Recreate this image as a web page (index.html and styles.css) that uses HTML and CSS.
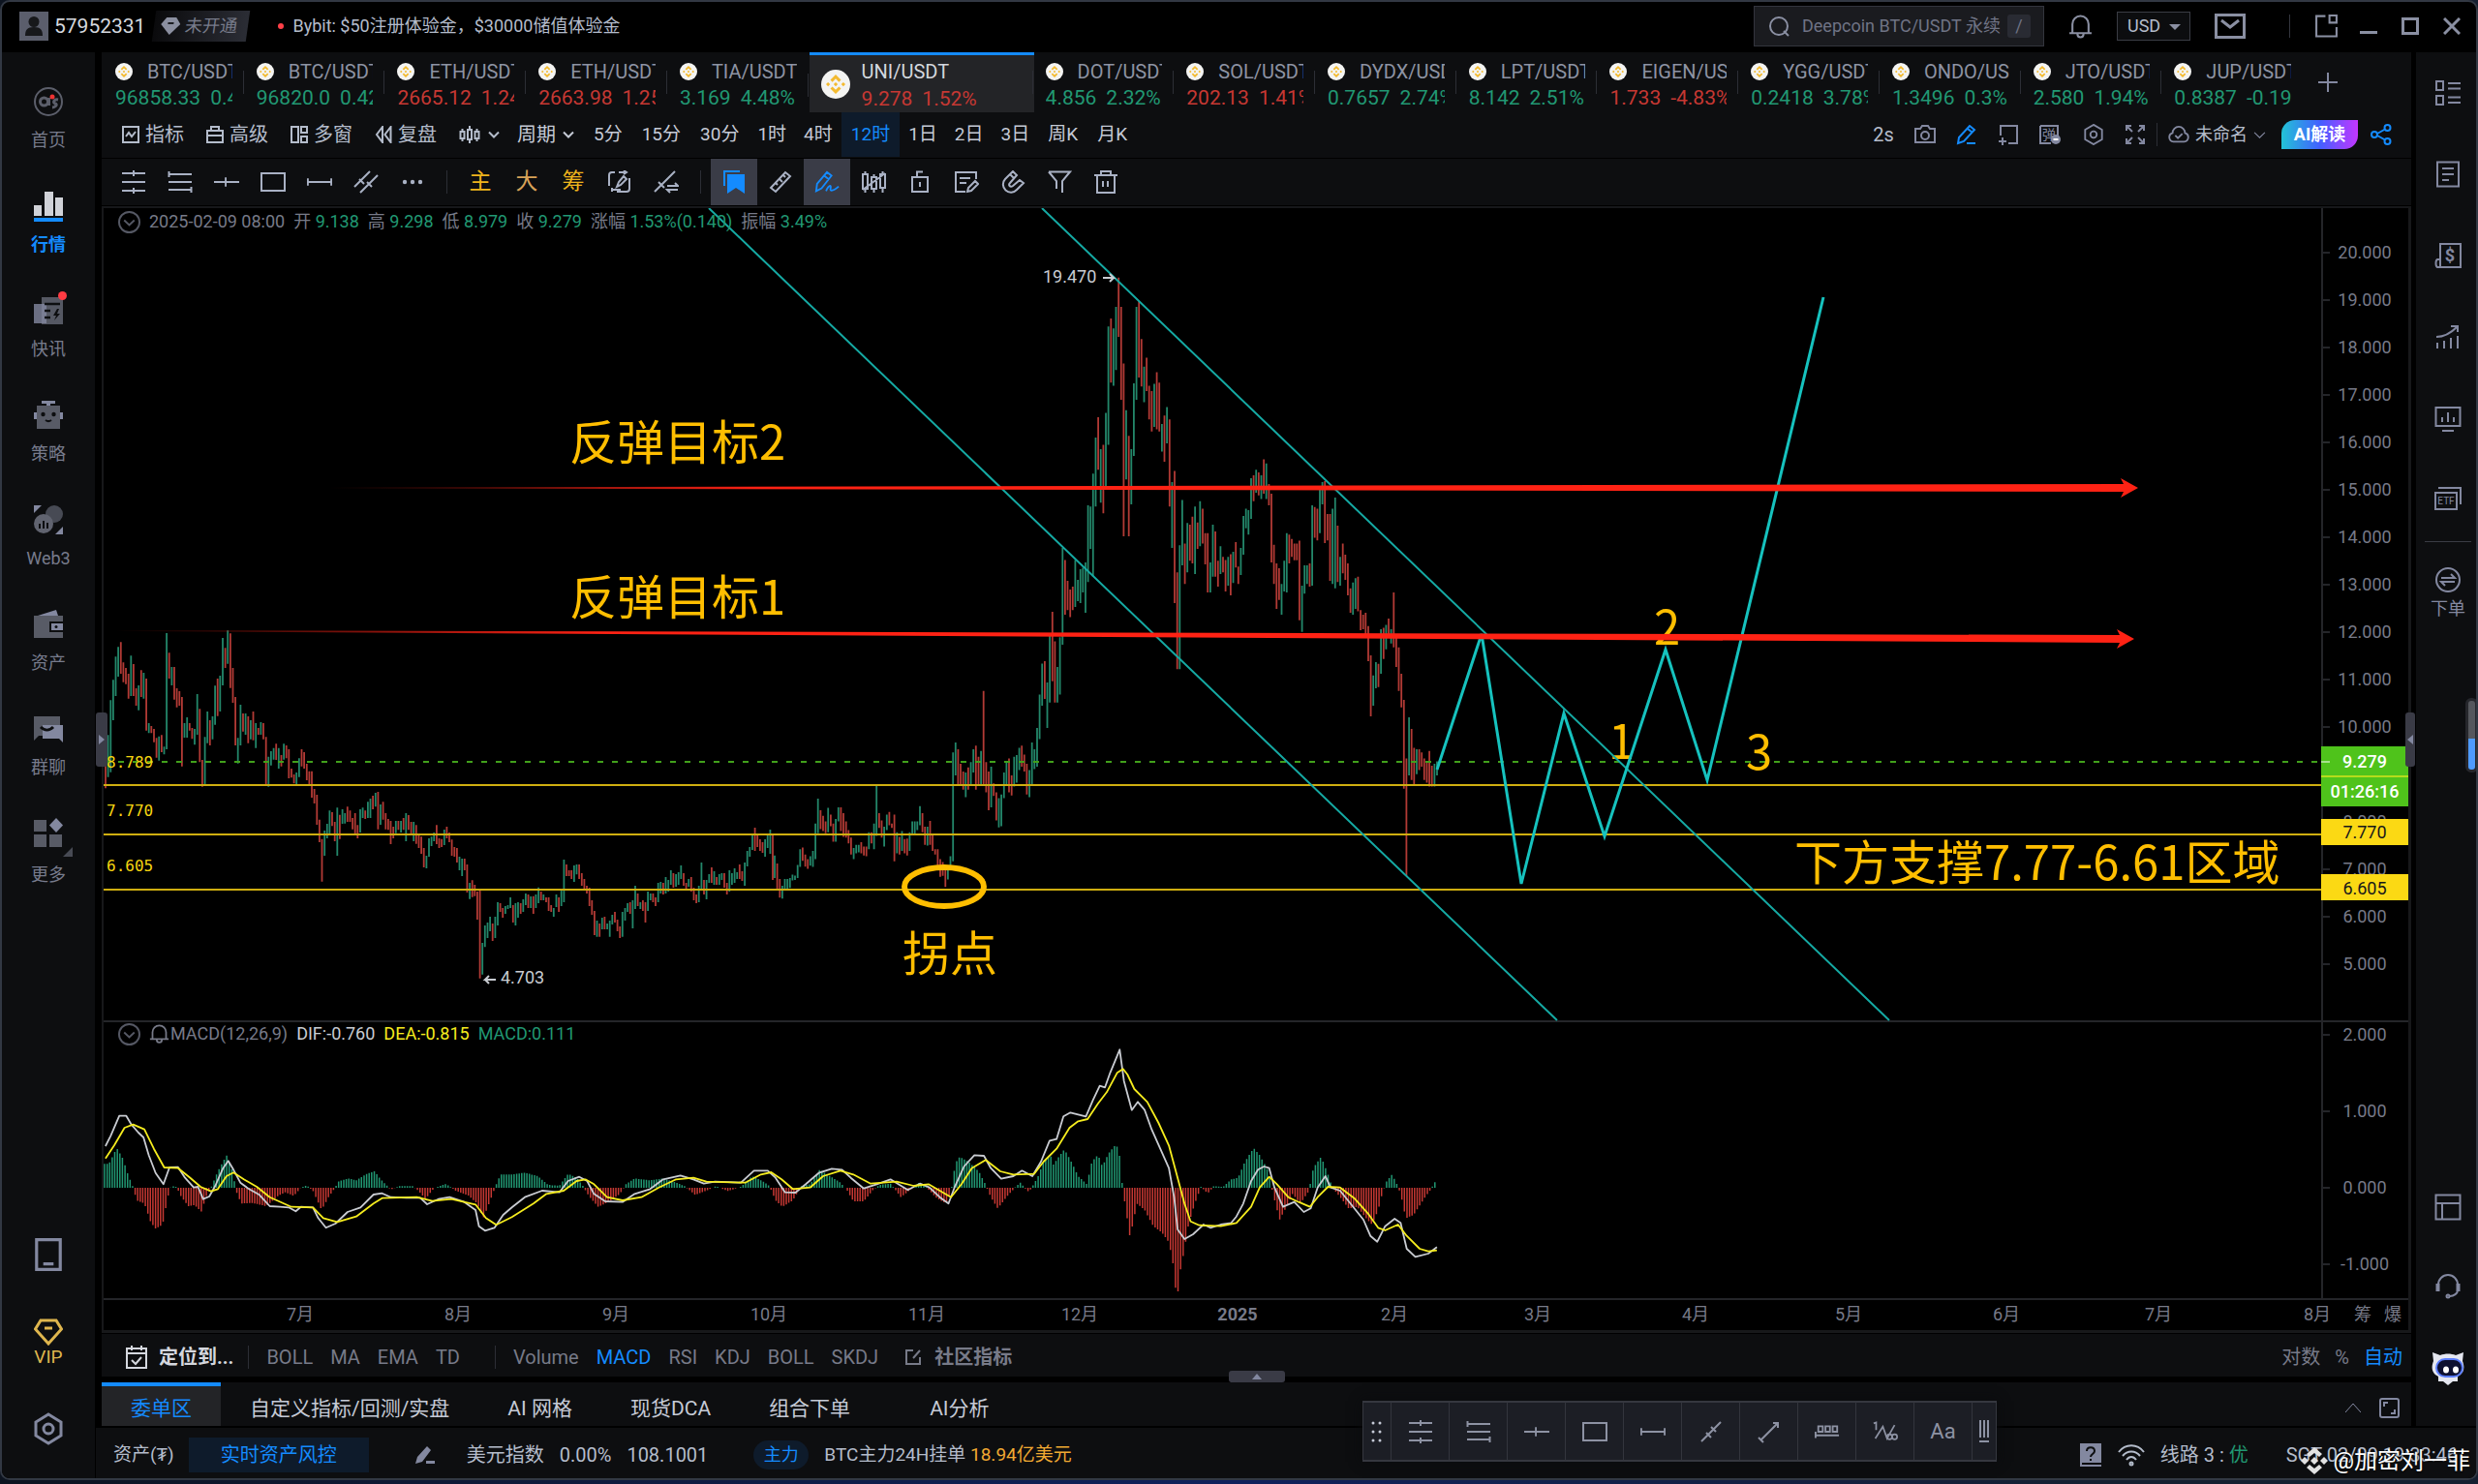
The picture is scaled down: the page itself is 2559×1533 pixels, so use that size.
FILE: index.html
```html
<!DOCTYPE html>
<html lang="zh-CN">
<head>
<meta charset="utf-8">
<title>UNI/USDT</title>
<link rel="stylesheet" href="styles.css">
</head>
<body>
<svg class="defs" aria-hidden="true">
  <symbol id="coin" viewBox="0 0 24 24"><circle cx="12" cy="12" r="12" fill="#f4f4f2"/><path fill="#f3ba2f" d="M12 4l4.400 4.400-1.700 1.700L12 7.400l-2.700 2.700-1.700-1.700zM5.700 10.300L7.400 12l-1.700 1.700L4 12zM18.300 10.300L20 12l-1.700 1.700-1.700-1.700zM12 10.300l1.700 1.700-1.700 1.700-1.700-1.700zM12 20l-4.400-4.400 1.700-1.700 2.700 2.700 2.700-2.700 1.700 1.700z"/></symbol>
  <symbol id="chev" viewBox="0 0 12 12"><path d="M1 3.500l5 5 5-5"/></symbol>
  <symbol id="hlines" viewBox="0 0 26 24"><path d="M1 3h24M1 12h24M1 21h24M13 0v6M13 18v6"/></symbol>
  <symbol id="hrays" viewBox="0 0 26 24"><path d="M1 4h24M1 12h24M1 20h24M1.500 1v6M24.500 17v6"/></symbol>
  <symbol id="hcross" viewBox="0 0 28 24"><path d="M0 12h28M13 7v10"/></symbol>
  <symbol id="rect" viewBox="0 0 26 24"><path d="M1 3h24v18H1z"/></symbol>
  <symbol id="hseg" viewBox="0 0 28 24"><path d="M1 12h26M1 8v8M27 8v8"/></symbol>
  <symbol id="hex" viewBox="0 0 24 24"><path d="M12 1l9.500 5.500v11L12 23l-9.500-5.500v-11z"/><circle cx="12" cy="12" r="3.600"/></symbol>
  <symbol id="circlechev" viewBox="0 0 24 24"><circle cx="12" cy="12" r="11"/><path d="M6.500 10l5.500 5 5.500-5"/></symbol>
</svg>

<div class="window">
  <header class="titlebar">
    <span class="avatar"><svg viewBox="0 0 30 30"><circle cx="15" cy="10.500" r="5.500"/><path d="M6 25c0-6 2-9 9-9s9 3 9 9z"/></svg></span>
    <span class="uid">57952331</span>
    <span class="badge"><svg viewBox="0 0 22 20"><path d="M6 1h10l5 7-10 11L1 8z" fill="#8b8fa0"/><path d="M8 7h6" stroke="#1c1d22" stroke-width="2"/></svg><em>未开通</em></span>
    <a class="news" href="#"><i></i>Bybit: $50注册体验金，$30000储值体验金</a>
    <div class="titleright">
      <label class="search"><svg viewBox="0 0 24 24"><circle cx="12" cy="12" r="9"/><path d="M17 17l5 5"/></svg><input type="text" placeholder="Deepcoin BTC/USDT 永续" aria-label="搜索"><kbd>/</kbd></label>
      <button class="ib bell" aria-label="通知"><svg viewBox="0 0 24 24"><path d="M1 19h22M4 19v-9a8 8 0 0 1 16 0v9M9 20c0 4 6 4 6 0"/></svg></button>
      <span class="currency"><select aria-label="货币"><option>USD</option></select></span>
      <button class="ib mail" aria-label="邮件"><svg viewBox="0 0 32 26"><path d="M1.500 1.500h29v23h-29zM7 7l9 7 9-7"/></svg></button>
      <span class="tdiv"></span>
      <button class="ib wide" aria-label="布局"><svg viewBox="0 0 24 24"><path d="M11 2H2v20h20v-9M15 1.500h7v7h-7z"/></svg></button>
      <button class="ib" aria-label="最小化"><svg viewBox="0 0 18 18"><path d="M0 15.500h18"/></svg></button>
      <button class="ib" aria-label="最大化"><svg viewBox="0 0 18 18"><path d="M1.500 1.500h15v15h-15z"/></svg></button>
      <button class="ib" aria-label="关闭"><svg viewBox="0 0 18 18"><path d="M1 1l16 16M17 1L1 17"/></svg></button>
    </div>
  </header>

  <div class="shell">
    <nav class="side">
      <a href="#"><svg viewBox="0 0 32 32"><g fill="none" stroke="#5b5e6a" stroke-width="2"><circle cx="16" cy="16" r="14"/><circle cx="11.500" cy="16" r="4" stroke-width="3"/><path d="M16.500 12v8M26 14c-4-1-6 3-3 4s0 4-3 4" stroke-width="3"/></g><circle cx="20" cy="11" r="2.500" fill="#e33"/></svg>首页</a>
      <a href="#" class="on"><svg viewBox="0 0 32 32"><path fill="#d0d2d8" d="M1 15h8v11H1zM12 1h9v25h-9zM23 7h8v19h-8z"/><path fill="#148bff" d="M1 28h30v4H1z"/></svg>行情</a>
      <a href="#" class="dot"><svg viewBox="0 0 32 32"><path fill="#555863" d="M9 2h22v28H9z"/><path fill="#8388a0" opacity=".8" d="M1 9h13v20H1z"/><path stroke="#0d0e10" stroke-width="2.500" fill="none" d="M12 9h16M12 16h6M12 23h6"/><path fill="#0d0e10" d="M25 14l-4 7h3l-2 5 6-7h-3l2-5z"/></svg>快讯</a>
      <a href="#"><svg viewBox="0 0 32 32"><path fill="#8388a0" d="M9 1h14v3h-5v4h-4V4H9zM1 13h3v7H1zM28 13h3v7h-3z"/><path fill="#585b66" d="M4 6h24v24H4z"/><path stroke="#0d0e10" stroke-width="2" fill="none" d="M13 21c2 1.500 4 1.500 6 0"/><circle cx="10.500" cy="15" r="2.200"/><circle cx="21.500" cy="15" r="2.200"/></svg>策略</a>
      <a href="#"><svg viewBox="0 0 32 32"><circle cx="22" cy="10" r="9" fill="#474a54"/><circle cx="11" cy="20" r="10" fill="#60636f"/><path fill="#8388a0" d="M1 1h8L1 9zM31 31h-8l8-8z"/><path stroke="#0d0e10" stroke-width="2" d="M7 25v-5M11 25v-8M15 25v-6"/></svg>Web3</a>
      <a href="#"><svg viewBox="0 0 32 32"><path fill="#8388a0" d="M5 7l19-6 2 6z"/><path fill="#585b66" d="M1 7h30v23H1z"/><path fill="#0d0e10" d="M17 13h14v11H17z"/><path fill="#8388a0" d="M19 15h12v7H19z"/><circle cx="24" cy="18.500" r="1.500"/></svg>资产</a>
      <a href="#"><svg viewBox="0 0 32 32"><path fill="#585b66" d="M1 3h27v20H6l-5 5z"/><path fill="#8388a0" d="M10 12h21v18l-4-4H10z"/><path stroke="#0d0e10" stroke-width="3" fill="none" d="M8 14c4 4 9 4 13 0"/></svg>群聊</a>
      <a href="#" class="more"><svg viewBox="0 0 32 32"><path fill="#585b66" d="M1 2h13v12H1zM1 17h13v13H1zM17 17h13v13H17z"/><path fill="#8388a0" d="M24 0l7 7.500-7 7.500-7-7.500z"/></svg>更多</a>
      <div class="sidefoot">
        <button aria-label="手机"><svg viewBox="0 0 26 32"><path d="M1.500 1.500h23v29h-23zM8 25h10"/></svg></button>
        <button class="vip"><svg viewBox="0 0 30 28"><path d="M7 2h16l5.500 9L15 26 1.500 11zM11 10h8"/></svg>VIP</button>
        <button aria-label="设置"><svg viewBox="0 0 30 34"><path d="M15 2l13 8v14l-13 8-13-8V10z"/><circle cx="15" cy="17" r="5"/></svg></button>
      </div>
    </nav>

    <div class="right">
      <div class="work">
        <main class="center">
          <div class="tabs">
            <div class="tablist" id="tabs"></div>
            <button class="plus" aria-label="添加"><svg viewBox="0 0 20 20"><path d="M10 0v20M0 10h20"/></svg></button>
          </div>

          <div class="bar periods">
            <div class="tools">
              <button><svg viewBox="0 0 18 18"><path d="M1 1h16v16H1zM4 11l3-4 3 4 4-5"/></svg>指标</button>
              <button><svg viewBox="0 0 18 18"><path d="M1 5h16v12H1zM5 5V1h8v4M1 10h16"/></svg>高级</button>
              <button><svg viewBox="0 0 18 18"><path d="M1 1h7v16H1zM11 1h6v6h-6zM11 11h6v6h-6z"/></svg>多窗</button>
              <button><svg viewBox="0 0 18 18"><path d="M8 1L2 9l6 8zM16.500 1l-6 8 6 8z"/></svg>复盘</button>
              <button class="kind" aria-label="K线类型"><svg viewBox="0 0 22 18"><path d="M1.500 6h4v7h-4zM9 4h4v10H9zM16.500 6h4v7h-4zM3.500 3v3M3.500 13v3M11 0v4M11 14v4M18.500 3v3M18.500 13v3"/></svg><svg class="chev"><use href="#chev"/></svg></button>
            </div>
            <div class="times">
              <button class="cyc">周期<svg class="chev"><use href="#chev"/></svg></button>
              <button>5分</button><button>15分</button><button>30分</button><button class="slim">1时</button><button class="slim">4时</button><button class="on">12时</button><button class="slim">1日</button><button class="slim">2日</button><button class="slim">3日</button><button>周K</button><button>月K</button>
            </div>
            <div class="acts">
              <button class="txt">2s</button>
              <button aria-label="截图"><svg viewBox="0 0 22 22"><path d="M1 5h5l2-3h6l2 3h5v14H1z"/><circle cx="11" cy="12" r="4"/></svg></button>
              <button class="blue" aria-label="画线"><svg viewBox="0 0 22 22"><path d="M14 2l5 4L8 18l-6 2 1-6zM11 20h9M12 5l5 4"/></svg></button>
              <button aria-label="区间"><svg viewBox="0 0 22 22"><path d="M3 12V2h17v18h-9M1 18h8M5 14v8"/></svg></button>
              <button class="dan" aria-label="弹幕"><svg viewBox="0 0 22 22"><path d="M1 2h18v11M1 2v18h11"/><circle cx="17" cy="16" r="5" fill="#8388a0" stroke="none"/><path d="M14.500 16h5" stroke="#fff"/></svg><span>弹</span></button>
              <button aria-label="设置"><svg><use href="#hex"/></svg></button>
              <button aria-label="全屏"><svg viewBox="0 0 22 22"><path d="M2 7V2h5M15 2h5v5M20 15v5h-5M7 20H2v-5M2 2l6 6M20 2l-6 6M20 20l-6-6M2 20l6-6"/></svg></button>
              <span class="vdiv"></span>
              <button class="cloud"><svg viewBox="0 0 24 22"><path d="M6 19a5 5 0 0 1-1-9.800 7 7 0 0 1 14 0A5 5 0 0 1 18 19zM8 12l3 3 5-5"/></svg>未命名<svg class="chev"><use href="#chev"/></svg></button>
              <button class="ai">AI解读</button>
              <button class="blue" aria-label="分享"><svg viewBox="0 0 22 22"><circle cx="4" cy="11" r="3"/><circle cx="17.500" cy="4" r="3"/><circle cx="17.500" cy="18" r="3"/><path d="M7 10l8-4.500M7 12l8 4.500"/></svg></button>
            </div>
          </div>

          <div class="bar draw">
            <button aria-label="水平线"><svg><use href="#hlines"/></svg></button>
            <button aria-label="射线"><svg><use href="#hrays"/></svg></button>
            <button aria-label="十字"><svg><use href="#hcross"/></svg></button>
            <button aria-label="矩形"><svg><use href="#rect"/></svg></button>
            <button aria-label="线段"><svg><use href="#hseg"/></svg></button>
            <button aria-label="平行线"><svg viewBox="0 0 26 24"><path d="M1 17L17 1M7 23L25 5M6 9l5 5M14 12l5 5"/></svg></button>
            <button aria-label="更多"><svg viewBox="0 0 26 24"><g fill="#a9b1c4" stroke="none"><circle cx="5" cy="12" r="2.200"/><circle cx="13" cy="12" r="2.200"/><circle cx="21" cy="12" r="2.200"/></g></svg></button>
            <span class="vdiv"></span>
            <button class="gold">主</button><button class="gold soft">大</button><button class="gold">筹</button>
            <button aria-label="编辑"><svg viewBox="0 0 26 24"><path d="M8 2H5a3 3 0 0 0-3 3v11M10 22h10a3 3 0 0 0 3-3V8M5 20h9M10 17l2-5 5-6 3 3-6 6zM20 2h-8M17 0l3 2-3 2M5 18v4"/></svg></button>
            <button aria-label="切换"><svg viewBox="0 0 26 24"><path d="M1 22L22 1M5 12l6 6M14 16h11l-3-3M25 20H14l3 3"/></svg></button>
            <span class="vdiv"></span>
            <button class="sel" aria-label="收藏"><svg viewBox="0 0 26 24"><path fill="#148bff" stroke="none" d="M6 4h18v20l-9-6-9 6z"/><path stroke="#148bff" d="M3 16V1h16"/></svg></button>
            <button aria-label="标尺"><svg viewBox="0 0 26 24"><path d="M3 18L18 2l5 4L8 22zM8 13l2 2M12 9l3 3M16 5l2 2"/></svg></button>
            <button class="sel blue" aria-label="画笔"><svg viewBox="0 0 28 24"><path d="M2 22l1-8L14 1l5 4L8 19zM11 5l5 4M13 22c3-7 6-7 5-3s3 3 9-2"/></svg></button>
            <button aria-label="K线"><svg viewBox="0 0 26 24"><path d="M2 4h5v15H2zM11 7h5v12h-5zM20 4h5v14h-5zM4.500 1v3M4.500 19v4M13.500 4v3M13.500 19v4M22.500 1v3M22.500 18v5M2 20L25 3"/></svg></button>
            <button aria-label="锁定"><svg viewBox="0 0 26 24"><path d="M5 7h16v15H5zM13 12v5M10 7V1.500h6"/></svg></button>
            <button aria-label="笔记"><svg viewBox="0 0 26 24"><path d="M12 22H2V2h21v7M6 8h11M6 13h7M14 22l1-4 7-7 3 3-7 7z"/></svg></button>
            <button aria-label="磁铁"><svg viewBox="0 0 26 24"><path d="M13 1L5 9a8 8 0 0 0 12 11l7-7-4-3-7 6c-3 2-5-1-3-3l7-8zM10 4l4 4"/></svg></button>
            <button aria-label="筛选"><svg viewBox="0 0 26 24"><path d="M2 1.500h22L16 11v12M10 19v-8L2 1.500"/></svg></button>
            <button aria-label="删除"><svg viewBox="0 0 26 24"><path d="M1 5h24M8 5V1h10v4M4 5v18h18V5M10 11v6M15 11v6"/></svg></button>
          </div>

          <section class="chart">
            <svg id="plot" viewBox="107 215 2380 1159" role="img" aria-label="UNI/USDT 12时 K线">
              <defs>
                <linearGradient id="fade" x1="0" x2="1"><stop offset="0" stop-color="#ff2214" stop-opacity="0"/><stop offset=".24" stop-color="#ff2214"/></linearGradient>
              </defs>
              <g id="axis"></g>
              <g id="candles"></g>
              <path class="last" d="M107 787H2397"/>
              <g class="level"><path d="M107 811H2397M107 862H2397M107 919H2397"/></g>
              <g class="note">
                <text x="588" y="475">反弹目标2</text><text x="588" y="635">反弹目标1</text>
                <text x="1708" y="666">2</text><text x="1661" y="784">1</text><text x="1803" y="795">3</text>
                <text x="1853" y="909">下方支撑7.77-6.61区域</text><text x="932" y="1003">拐点</text>
              </g>
              <g class="channel"><path d="M732 215L1608 1054M1076 215L1951 1054"/><path class="zig" d="M1484 795L1530 655L1571 913L1615 737L1657 864L1720 671L1763 806L1883 307"/></g>
              <path fill="url(#fade)" d="M340 503.500L2193 500L2190 494L2208 504L2190 514L2193 508L340 504.500z"/>
              <path fill="url(#fade)" d="M120 651L2189 656L2186 650L2204 660L2186 670L2189 664L120 652z"/>
              <ellipse cx="975" cy="916" rx="41" ry="20" class="ring"/>
              <g class="peak"><text x="1077" y="292">19.470</text><text x="517" y="1016">4.703</text><path d="M1139 287h11l-4-4M1150 287l-4 4M512 1012h-11l4-4M501 1012l4 4"/></g>
              <g class="side-price"><text x="110" y="793">8.789</text><text x="110" y="843">7.770</text><text x="110" y="900">6.605</text></g>
              <g id="macd"></g>
              <g class="tags">
                <rect x="2397" y="771" width="90" height="62" fill="#4fc31b"/><path d="M2397 802h90" stroke="#b5dc1c" stroke-width="2"/><path d="M2397 787h9" stroke="#fff"/>
                <rect x="2397" y="846" width="90" height="27" fill="#fbd914"/><rect x="2397" y="903" width="90" height="27" fill="#fbd914"/>
                <text x="2442" y="793" class="w">9.279</text><text x="2442" y="824" class="w">01:26:16</text>
                <text x="2442" y="866">7.770</text><text x="2442" y="924">6.605</text>
              </g>
            </svg>
            <div class="legend ohlc"><svg><use href="#circlechev"/></svg><span>2025-02-09 08:00</span><span>开 <b>9.138</b></span><span>高 <b>9.298</b></span><span>低 <b>8.979</b></span><span>收 <b>9.279</b></span><span>涨幅 <b>1.53%(0.140)</b></span><span>振幅 <b>3.49%</b></span></div>
            <div class="legend macdl"><svg><use href="#circlechev"/></svg><span class="bellname"><svg viewBox="0 0 24 24"><path d="M1 18h22M4 18v-8a8 8 0 0 1 16 0v8M9 19c0 4 6 4 6 0"/></svg>MACD(12,26,9)</span><span class="dif">DIF:-0.760</span><span class="dea">DEA:-0.815</span><b>MACD:0.111</b></div>
            <button class="grip gl" aria-label="展开左栏"></button>
            <button class="grip gr" aria-label="展开右栏"></button>
          </section>

          <div class="bar inds">
            <button class="locate"><svg viewBox="0 0 22 24"><path d="M1 3h20v20H1zM1 8h20M6 0v5M16 0v5M6 15l4 4 6-7"/></svg>定位到...</button>
            <span class="vdiv"></span>
            <button>BOLL</button><button>MA</button><button>EMA</button><button>TD</button>
            <span class="vdiv far"></span>
            <button>Volume</button><button class="on">MACD</button><button>RSI</button><button>KDJ</button><button>BOLL</button><button>SKDJ</button>
            <button class="comm"><svg viewBox="0 0 16 16"><path d="M8 1H1v14h14V8M8 9l7-8"/></svg>社区指标</button>
            <div class="scale"><button>对数</button><button>%</button><button class="on">自动</button></div>
            <button class="grip gb" aria-label="展开底栏"></button>
          </div>

          <div class="bar panels">
            <button class="on">委单区</button><button>自定义指标/回测/实盘</button><button>AI 网格</button><button>现货DCA</button><button>组合下单</button><button class="last-tab">AI分析</button>
            <div class="pright"><svg viewBox="0 0 16 16"><path d="M0 12l8-9 8 9"/></svg><svg class="full" viewBox="0 0 21 21"><rect x="1" y="1" width="19" height="19" rx="2"/><path d="M5 9V5h4M16 12v4h-4"/></svg></div>
          </div>
        </main>

        <aside class="rail">
          <button aria-label="列表"><svg viewBox="0 0 28 28"><path d="M2 2h7v9H2zM2 17h7v9H2zM14 4h13M14 9.500h13M14 18.500h13M14 24h13"/></svg></button>
          <button aria-label="资讯"><svg viewBox="0 0 28 28"><path d="M3 1.500h22v25H3zM8 8h12M8 14h12M8 20h7"/></svg></button>
          <button aria-label="资金"><svg viewBox="0 0 28 28"><path d="M6 2h21v24H3c-2-1-2-7 0-8h3zM6 18v7"/></svg><span>$</span></button>
          <button aria-label="走势"><svg viewBox="0 0 28 28"><path d="M3 26v-6M10 26v-8M17 26V15M24 26V13M2 14c8 0 15-4 21-10M17 3h7v6"/></svg></button>
          <button aria-label="数据"><svg viewBox="0 0 28 28"><path d="M1.500 3h25v19h-25zM8 27h12M8 18v-5M14 18V8M20 18v-5"/></svg></button>
          <button aria-label="ETF"><svg viewBox="0 0 28 28"><path d="M1 7h22v17H1zM4 2h23v17"/></svg><span class="etf">ETF</span></button>
          <hr>
          <button class="order"><svg viewBox="0 0 28 28"><circle cx="14" cy="14" r="12"/><path d="M7 12h14l-4-4M21 16H7l4 4"/></svg>下单</button>
          <div class="railfoot">
            <button aria-label="面板"><svg viewBox="0 0 28 28"><path d="M1.500 1.500h25v25h-25zM1.500 10h25M8 10v16"/></svg></button>
            <button aria-label="客服"><svg viewBox="0 0 28 28"><path d="M4 14v-1a10 10 0 0 1 20 0v1M24 19c0 3-4 6-8 6"/><path d="M3.500 12v8M24.500 12v8" stroke-width="4"/><circle cx="14" cy="25" r="1.500"/></svg></button>
            <button aria-label="AI助手"><svg class="bot" viewBox="0 0 36 36"><path fill="#e4e6ef" d="M2 2l8 3c5-2 11-2 16 0l8-3-1 9c3 8 1 13-5 16v5h-5l-5 4-5-4H8v-5C2 24 0 19 3 11z"/><rect x="6" y="9" width="27" height="18" rx="9" fill="#0d1030" stroke="#5b7dff" stroke-width="2"/><ellipse cx="16" cy="20" rx="3" ry="3.500" fill="#fff"/><ellipse cx="26" cy="20" rx="3" ry="3.500" fill="#fff"/></svg></button>
          </div>
        </aside>
      </div>

      <footer class="status">
        <a href="#" class="assets">资产(₮)</a><button class="risk">实时资产风控</button>
        <svg class="pen" viewBox="0 0 20 18"><path d="M12 0l4 4-9 12-7 2 2-7zM11 15h9v3h-9z"/></svg>
        <span class="idx">美元指数</span><span>0.00%</span><span class="num">108.1001</span>
        <span class="pill">主力</span><span class="orders">BTC主力24H挂单 <b>18.94亿美元</b></span>
        <div class="sright"><svg class="help" viewBox="0 0 24 24"><path fill="#8388a0" d="M1 0h22v24H1z"/><path stroke="#0d0e10" stroke-width="2" fill="none" d="M8 8c0-5 8-5 8 0 0 3-4 3-4 6M12 16v2M3 21h20"/></svg><svg class="wifi" viewBox="0 0 30 24"><path d="M2 9c7-9 19-9 26 0M6 13c5-6 13-6 18 0M10 17c3-4 7-4 10 0"/><circle cx="15" cy="21" r="1.500"/></svg><span>线路 3 : <i>优</i></span><time>SGT 02/09 19:33:46</time></div>
      </footer>
    </div>
  </div>

  <div class="float">
    <span class="drag"><svg viewBox="0 0 12 24"><g fill="#c5cad6" stroke="none"><circle cx="2" cy="3" r="1.500"/><circle cx="9" cy="3" r="1.500"/><circle cx="2" cy="12" r="1.500"/><circle cx="9" cy="12" r="1.500"/><circle cx="2" cy="21" r="1.500"/><circle cx="9" cy="21" r="1.500"/></g></svg></span>
    <button aria-label="水平线"><svg><use href="#hlines"/></svg></button>
    <button aria-label="射线"><svg><use href="#hrays"/></svg></button>
    <button aria-label="十字"><svg><use href="#hcross"/></svg></button>
    <button aria-label="矩形"><svg><use href="#rect"/></svg></button>
    <button aria-label="线段"><svg><use href="#hseg"/></svg></button>
    <button aria-label="趋势线"><svg viewBox="0 0 26 24"><path d="M3 22L23 2M8 13l5 5M13 7l5 5"/></svg></button>
    <button aria-label="箭头"><svg viewBox="0 0 26 24"><path d="M4 21L22 3M17 3h5v5M2 18l5 5"/></svg></button>
    <button aria-label="量尺"><svg viewBox="0 0 28 24"><path d="M1 16h26M1 12v7M4 6h5v6H4zM12 6h5v6h-5zM20 6h5v6h-5z"/></svg></button>
    <button aria-label="波浪"><svg viewBox="0 0 30 24"><path d="M1 2l3-1v9M3 20L12 6l5 14L26 4"/><circle cx="20" cy="18" r="3"/><circle cx="26" cy="18" r="3"/></svg></button>
    <button class="aa">Aa</button>
    <span class="drag end"><svg viewBox="0 0 12 24"><path d="M2 0v18M6 0v18M10 0v18M1 22h10"/></svg></span>
  </div>

  <div class="scroller"></div>
  <div class="mark"><svg viewBox="0 0 28 28"><path d="M14 0l8 7-3 3-5-4-5 4-3-3zM4 10l4 4-4 4-4-4zM24 10l4 4-4 4-4-4zM14 10l4 4-4 4-4-4zM14 28l-8-7 3-3 5 4 5-4 3 3z"/></svg>@加密刘一菲</div>
</div>
<script src="chart.js"></script>
</body>
</html>
```
FILE: styles.css
```css
* { box-sizing: border-box; }
body { margin: 0; min-height: 100vh; background: linear-gradient(90deg, #0d1420, #10215c 50%, #151f30 85%); font-family: Roboto, "Noto Sans CJK SC", sans-serif; font-size: 20px; line-height: 24px; color: #b4bccb; }
button { appearance: none; border: 0; background: none; padding: 0; font: inherit; color: inherit; display: flex; align-items: center; justify-content: center; white-space: nowrap; }
a { color: inherit; text-decoration: none; }
svg { fill: none; stroke: currentColor; display: block; flex: none; }
b, i, em { font-weight: 400; }
i { font-style: normal; }
.defs { position: absolute; width: 0; height: 0; }
.window { position: relative; min-height: calc(100vh - 4px); border: 2px solid #323843; border-radius: 10px; overflow: hidden; background: #000; display: flex; flex-direction: column; }
.titlebar { height: 52px; padding: 0 16px 2px 18px; display: flex; align-items: center; flex: none; }
.avatar { width: 30px; height: 30px; background: #5b5e6c; }
.avatar svg { fill: #17181b; stroke: none; }
.uid { margin-left: 6px; font-size: 21px; color: #d5d8de; }
.badge { margin-left: 9px; width: 97px; height: 32px; display: flex; align-items: center; gap: 4px; font-size: 18px; color: #777b8a; background: linear-gradient(90deg, #0a0a0c, #2b2d35); transform: skewX(-8deg); }
.badge svg { width: 22px; height: 20px; margin-left: 6px; stroke: none; }
.badge em { font-style: normal; }
.news { margin-left: 31px; display: flex; align-items: center; gap: 9px; font-size: 18px; color: #b4bccb; }
.news i { width: 6px; height: 6px; border-radius: 3px; background: #ff4048; }
.titleright { margin-left: auto; display: flex; align-items: center; gap: 25px; color: #8a8fa2; }
.search { width: 300px; height: 42px; border: 1px solid #33353d; background: #1a1b1f; display: flex; align-items: center; padding: 0 13px; gap: 12px; }
.search svg { width: 24px; height: 24px; stroke-width: 2; }
.search input { flex: 1; min-width: 0; border: 0; background: none; padding: 0; font: 18px/24px Roboto, "Noto Sans CJK SC", sans-serif; }
.search input::placeholder { color: #6f7385; }
.search kbd { width: 24px; height: 24px; margin-left: -12px; background: #292b33; border-radius: 3px; font: 18px/24px Roboto, sans-serif; text-align: center; color: #6f7385; }
.ib svg { width: 18px; height: 18px; stroke-width: 3; }
.bell svg, .wide svg { width: 25px; height: 26px; stroke-width: 2; }
.wide { margin-right: -3px; }
.mail { margin-right: 20px; }
.mail svg { width: 32px; height: 26px; }
.tdiv { width: 1px; height: 24px; background: #33363e; }
.currency { position: relative; }
.currency::after { content: ""; position: absolute; right: 10px; top: 13px; border: 6px solid transparent; border-top-color: #8a8fa2; border-bottom: 0; }
.currency select { appearance: none; width: 76px; height: 30px; border: 1px solid #3a3c44; background: #0c0d0f; color: #b4bccb; font: 18px/24px Roboto, sans-serif; padding: 0 10px; }
.shell { flex: 1; display: flex; }
.side { width: 96px; flex: none; background: #0d0e10; padding-top: 35px; display: flex; flex-direction: column; align-items: center; margin-right: 1px; }
.side a { position: relative; width: 96px; display: flex; flex-direction: column; align-items: center; gap: 12px; margin-bottom: 40px; font-size: 18px; color: #777b8c; }
.side a svg { width: 32px; height: 32px; stroke: none; fill: #0d0e10; }
.side a.on { color: #148bff; font-weight: 700; }
.side a.more { gap: 15px; }
.dot::after { content: ""; position: absolute; left: 58px; top: -4px; width: 9px; height: 9px; border-radius: 5px; background: #ff3b43; }
.more::after { content: ""; position: absolute; left: 63px; top: 30px; border: 5px solid transparent; border-right-color: #474a54; border-bottom-color: #474a54; }
.sidefoot { margin-top: auto; padding-bottom: 34px; display: flex; flex-direction: column; align-items: center; color: #8388a0; }
.sidefoot button { flex-direction: column; font-size: 19px; }
.sidefoot svg { width: 30px; height: 34px; stroke-width: 3; }
.sidefoot .vip { color: #dfb64e; margin: 49px 0 45px; }
.vip svg { height: 28px; }
.right { flex: 1; min-width: 0; display: flex; flex-direction: column; }
.work { display: flex; gap: 5px; padding-left: 6px; margin-bottom: 2px; }
.center { flex: 1; min-width: 0; }
.tabs { height: 62px; background: #0d0e10; display: flex; padding-left: 2px; }
.tablist { flex: 1; min-width: 0; display: flex; }
.tab { position: relative; flex: 1 1 0; min-width: 0; padding: 7px 13px 0 12px; color: #8d93a3; }
.tab + .tab::before { content: ""; position: absolute; left: -2px; top: 19px; width: 1px; height: 24px; background: #2c2e35; }
.tab div { display: flex; align-items: center; overflow: hidden; white-space: nowrap; height: 26px; }
.tab .name { gap: 15px; }
.tab .quote { gap: 10px; font-size: 21px; height: 28px; }
.tab svg { width: 18px; height: 18px; stroke: none; }
.up { color: #219873; }
.down { color: #c63833; }
.tab.on { flex: 0 0 232px; background: #232427; border-top: 3px solid #148bff; padding: 4px 12px 0 12px; color: #d4d7de; display: grid; grid-template-columns: 30px 1fr; column-gap: 12px; }
.tab.on .big { grid-row: 1 / 3; width: 30px; height: 30px; align-self: center; margin-bottom: 3px; }
.tab.on .quote { align-self: start; }
.plus { width: 111px; color: #8388a0; padding-right: 62px; }
.plus svg { width: 20px; height: 20px; stroke-width: 2; }
.bar { display: flex; align-items: center; background: #0d0e10; position: relative; }
.chev { width: 12px; height: 12px; stroke-width: 2; }
.periods { height: 47px; padding: 0 20px 1px 21px; margin-bottom: 1px; }
.tools { display: flex; gap: 23px; }
.tools button { gap: 6px; }
.tools svg { width: 18px; height: 18px; stroke-width: 2; }
.tools .kind { gap: 8px; }
.tools .kind svg { width: 22px; }
.tools .kind .chev { width: 12px; height: 12px; }
.times { display: flex; margin-left: 8px; height: 46px; font-size: 19px; color: #c5cad6; }
.times button { padding: 0 10px; }
.times .slim { padding: 0 9px; }
.times .cyc { gap: 7px; font-size: 20px; }
.times .on { color: #148bff; background: #0e1b2b; }
.acts { margin-left: auto; display: flex; align-items: center; gap: 21px; color: #8388a0; }
.acts button { min-width: 22px; }
.acts svg { width: 22px; height: 22px; stroke-width: 2; }
.acts .txt { color: #b4bccb; }
.acts .vdiv { margin: 0 -10px; }
.acts .chev { width: 13px; height: 13px; stroke-width: 1; }
.dan { position: relative; margin-right: 2px; }
.dan span { position: absolute; left: 3px; top: 1px; font-size: 14px; line-height: 20px; }
.cloud { gap: 6px; color: #b4bccb; font-size: 18px; }
.acts .cloud svg { color: #8388a0; }
.acts .ai { width: 79px; height: 30px; margin: 0 -8px 0 -5px; font-size: 18px; font-weight: 700; color: #fff; border-radius: 14px 0 14px 0; background: linear-gradient(90deg, #22c3d6, #4260ff 50%, #c336ff); }
.blue { color: #148bff; }
.vdiv { width: 1px; height: 24px; background: #2c2e35; flex: none; }
.draw { height: 48px; padding-left: 9px; color: #a9b1c4; margin-bottom: 1px; }
.draw button { width: 48px; height: 48px; }
.draw svg { width: 26px; height: 24px; stroke-width: 2; }
.draw .vdiv { margin: 0 10px 0 11px; }
.draw .gold { color: #efb41c; font-size: 23px; }
.draw .soft { color: #d8a258; }
.draw .sel { background: #3a3c47; }
.draw .blue { color: #148bff; }
.chart { position: relative; border: solid #17181a; border-width: 2px 3px 3px 2px; margin-bottom: 1px; background: #000; }
#plot { width: 100%; height: auto; stroke: none; }
#plot text { font-size: 18px; fill: #777a88; }
.frame { stroke: #242529; stroke-width: 2; }
.mid { text-anchor: middle; }
#plot .yr { font-weight: 700; }
.last { stroke: #41a01b; stroke-width: 2; stroke-dasharray: 6 9; }
.level { stroke: #cfae10; stroke-width: 2; }
.channel { stroke: #15a9a3; stroke-width: 2; fill: none; }
.zig { stroke: #16c2be; stroke-width: 3; }
.ring { stroke: #ffbe00; stroke-width: 6; }
#plot .note text { fill: #ffbe00; font: 49px "Noto Sans CJK SC", sans-serif; }
#plot .peak text { fill: #c9ccd2; }
.peak path { stroke: #c9ccd2; stroke-width: 2; }
#plot .side-price text { fill: #f5d410; font: 16px "DejaVu Sans Mono", monospace; }
#plot .tags text { text-anchor: middle; fill: #17181a; }
#plot .tags .w { fill: #fff; font-weight: 500; }
.legend { position: absolute; left: 15px; display: flex; align-items: center; gap: 9px; font-size: 18px; color: #777a88; white-space: nowrap; }
.legend > svg { width: 23px; height: 23px; stroke: #555864; stroke-width: 2; }
.legend b { color: #219873; }
.ohlc { top: 2px; }
.macdl { top: 841px; }
.bellname { display: flex; align-items: center; gap: 1px; }
.bellname svg { width: 21px; height: 22px; stroke-width: 2; }
.dif { color: #c9ccd2; }
.dea { color: #f5ec1e; }
.grip { position: absolute; background: #3a3b46; border-radius: 3px; }
.grip::after { content: ""; border: 5px solid transparent; }
.gl { left: -8px; top: 521px; width: 12px; height: 56px; }
.gl::after { border-left: 6px solid #8388a0; border-right: 0; }
.gr { right: -7px; top: 521px; width: 10px; height: 56px; }
.gr::after { border-right: 6px solid #8388a0; border-left: 0; }
.gb { left: 1164px; bottom: -6px; width: 58px; height: 12px; z-index: 1; }
.gb::after { border-bottom: 6px solid #8388a0; border-top: 0; }
.inds { height: 44px; padding: 4px 9px 0 25px; gap: 18px; margin-bottom: 6px; color: #777a88; }
.inds .on { color: #148bff; }
.locate { font-weight: 700; color: #d4d7de; gap: 12px; margin-right: -3px; }
.locate svg { width: 22px; height: 24px; stroke-width: 2; }
.inds .far { margin-left: 18px; }
.comm { font-weight: 700; gap: 14px; margin-left: 10px; }
.comm svg { width: 16px; height: 16px; stroke-width: 2; }
.scale { margin-left: auto; display: flex; gap: 15px; }
.panels { height: 45px; font-size: 21px; color: #c5cad6; }
.panels button { height: 45px; padding: 8px 30px 0; }
.panels .on { background: #232427; border-top: 4px solid #148bff; color: #148bff; padding-top: 4px; }
.panels .last-tab { padding-left: 52px; }
.pright { margin-left: auto; padding: 8px 12px 0 0; display: flex; align-items: center; gap: 19px; color: #8388a0; }
.pright svg { width: 16px; height: 16px; stroke-width: 1; }
.pright .full { width: 21px; height: 21px; stroke-width: 2; }
.rail { width: 62px; flex: none; background: #0d0e10; padding: 28px 0 42px 4px; display: flex; flex-direction: column; align-items: center; gap: 56px; color: #8388a0; }
.rail button { position: relative; flex-direction: column; }
.rail svg { width: 28px; height: 28px; stroke-width: 2; }
.rail span { position: absolute; left: 2px; top: 2px; width: 28px; text-align: center; font-size: 18px; font-weight: 700; }
.rail .etf { left: -2px; top: 4px; font-size: 10px; font-weight: 400; }
.rail hr { width: 48px; height: 1px; border: 0; background: #3a3c44; margin: -27px 0 -31px; flex: none; }
.rail .order { font-size: 18px; gap: 4px; }
.railfoot { margin-top: auto; display: flex; flex-direction: column; align-items: center; gap: 53px; }
.rail .bot { width: 36px; height: 36px; stroke: none; }
.status { flex: 1; min-height: 52px; background: #0d0e10; display: flex; align-items: center; padding: 4px 19px 0 18px; gap: 16px; }
.risk { width: 186px; height: 36px; background: #0e1b2b; color: #148bff; }
.assets { font-size: 19px; margin-right: -1px; }
.pen { width: 20px; height: 18px; margin: 0 17px 0 32px; stroke: none; fill: #8388a0; }
.num { margin-right: 31px; }
.pill { width: 57px; height: 30px; line-height: 30px; border-radius: 15px; background: #0e1b2b; color: #148bff; text-align: center; font-size: 18px; }
.orders { font-size: 19px; }
.status b { color: #f0a932; }
.sright { margin-left: auto; display: flex; align-items: center; gap: 15px; }
.sright i { color: #219873; }
.help { width: 24px; height: 24px; stroke: none; }
.wifi { width: 30px; height: 24px; stroke-width: 2; }
.sright time { margin-left: 24px; }
.float { position: absolute; right: 495px; bottom: 17px; height: 63px; display: flex; background: #1c1e25; border: 1px solid #35373f; border-width: 2px 1px; box-shadow: 0 0 12px #0a0b0d; color: #8d92a3; }
.float > * { width: 60px; border-right: 1px solid #33353d; display: flex; align-items: center; justify-content: center; }
.float svg { width: 26px; height: 24px; stroke-width: 2; }
.float .drag { width: 29px; }
.float .drag svg { width: 12px; }
.float .end { width: 24px; border-right: 0; }
.aa { font-size: 22px; }
.scroller { position: absolute; right: -2px; top: 719px; width: 13px; height: 77px; border: 3px solid #26272c; border-radius: 6px; background: linear-gradient(#55575d 55%, #4f9bff 55%); }
.mark { position: absolute; right: 6px; bottom: 4px; display: flex; align-items: center; gap: 5px; font-size: 24px; line-height: 28px; color: #fff; text-shadow: 0 1px 2px #000; }
.mark svg { width: 28px; height: 28px; stroke: none; fill: #e2e2e2; }
```
FILE: chart.js
```js
const NS = 'http://www.w3.org/2000/svg';
const put = (parent, tag, attrs, text) => {
  const n = document.createElementNS(NS, tag);
  for (const k in attrs) n.setAttribute(k, attrs[k]);
  if (text) n.textContent = text;
  parent.appendChild(n);
};
const $ = id => document.getElementById(id);

// Watch list tabs: name, price, change, direction
const tabs = [
  ['BTC/USDT', '96858.33', '0.46%', 'up'], ['BTC/USDT', '96820.0', '0.42%', 'up'],
  ['ETH/USDT', '2665.12', '1.24%', 'down'], ['ETH/USDT', '2663.98', '1.25%', 'down'],
  ['TIA/USDT', '3.169', '4.48%', 'up'], ['UNI/USDT', '9.278', '1.52%', 'down'],
  ['DOT/USDT', '4.856', '2.32%', 'up'], ['SOL/USDT', '202.13', '1.41%', 'down'],
  ['DYDX/USDT', '0.7657', '2.74%', 'up'], ['LPT/USDT', '8.142', '2.51%', 'up'],
  ['EIGEN/USDT', '1.733', '-4.83%', 'down'], ['YGG/USDT', '0.2418', '3.78%', 'up'],
  ['ONDO/USDT', '1.3496', '0.3%', 'up'], ['JTO/USDT', '2.580', '1.94%', 'up'],
  ['JUP/USDT', '0.8387', '-0.19%', 'up']];
$('tabs').innerHTML = tabs.map(([n, p, c, d], i) => {
  const coin = cls => `<svg class="${cls}"><use href="#coin"/></svg>`;
  const on = i === 5;
  return `<a href="#" class="tab${on ? ' on' : ''}">${on ? coin('big') : ''}<div class="name">${on ? '' : coin('')}<span>${n}</span></div><div class="quote ${d}"><span>${p}</span><span>${c}</span></div></a>`;
}).join('');

// Axes
const axis = $('axis');
put(axis, 'path', { class: 'frame', d: 'M107 1055H2487M107 1342H2487M2398 215V1342' });
for (let p = 20; p >= 5; p--) {
  if (p === 9) continue;
  const y = 261 + (20 - p) * 49;
  put(axis, 'path', { class: 'frame', d: `M2398 ${y}h8` });
  put(axis, 'text', { class: 'mid', x: 2442, y: y + 6 }, p.toFixed(3));
}
[2, 1, 0, -1].forEach((v, i) => {
  const y = 1069 + i * 79;
  put(axis, 'path', { class: 'frame', d: `M2398 ${y}h8` });
  put(axis, 'text', { class: 'mid', x: 2442, y: y + 6 }, v.toFixed(3));
});
[['7月', 310], ['8月', 473], ['9月', 636], ['10月', 794], ['11月', 957], ['12月', 1115], ['2025', 1278], ['2月', 1440], ['3月', 1588], ['4月', 1751], ['5月', 1909], ['6月', 2072], ['7月', 2229], ['8月', 2393], ['筹', 2440], ['爆', 2471]]
  .forEach(([t, x]) => put(axis, 'text', { class: t === '2025' ? 'mid yr' : 'mid', x, y: 1364 }, t));

// Candles: high, low, direction, listed left to right
const early = `500 583r 418 548g 310 533g 247 372g 175 297g 145 237g 130 228r 193 254r 210 260r 228 305r 172 297g 198 297r 273 327r 264 341g 217 300r 225 305g 243 404r 381 412g 390 412r 399 440r 427 488r 422 497g 418 471r 454 478g 102 462g 163 243r 207 264g 207 308r 273 332r 282 327r 300 515r 381 426g 363 426g 381 404r 396 430r 399 448g 291 417g 337 502r 495 578r 424 574g 345 443g 372 450r 360 431g 265 386g 243 359r 234 345g 117 264g 148 210r 94 197g 103 272r 210 318r 300 450r 427 506g 324 450g 351 407r 351 417g 360 443r 372 431g 345 434r 381 458g 396 417r 378 417g 381 431r 424 572r 485 578g 468 512g 458 494g 445 495r 458 522g 480 515r 445 494g 450 490r 462 552r 522 550r 540 568r 534 572g 490 548g 462 515r 471 522r 507 558r 530 572r 530 612r 585 630r 603 696r 680 750r 740 872r 714 792g 693 738g 652 725g 657 700r 687 747r 643 792g 665 740r 648 693g 660 692g 640 687r 652 687r 675 710r 660 725r 697 738r 648 720g 643 675g 652 678r 625 675g 615 675g 606 648r 597 640g 594 710r 633 696g 625 680r 660 710r 678 712r 684 756r 702 738r 684 722g 684 712r 684 720g 675 712r 660 747g 666 712r 687 725r 687 747g 697 755r 727 768r 733 786r 768 828r 792 831g 738 795g 733 762g 720 747g 697 756r 738 768r 740 765r 711 759g 702 738r 720 750r 742 792r 765 795r 768 813r 795 837g 801 855g 801 837r 819 906r 876 926g 868 920r 882 917r 903 990r 897 1172r 1062 1160g 1008 1075g 999 1047g 981 1026g 1002 1056r 981 1047g 936 1008g 939 966r 954 984r 948 972g 945 957g 921 954g 945 999r 939 1008g 936 984g 939 972r 927 966g 909 945g 912 954r 918 954g 917 972r 912 954g 890 939g 903 930r 912 930g 921 936r 921 963r 945 966r 954 981g 912 951g 921 966r 897 948g 804 936g 819 855r 837 855r 837 864r 822 873g 819 850g 819 864r 846 885r 864 897r 885 909r 891 948r 930 975r 963 1038r 993 1043g 1002 1043r 984 1020g 981 1020r 1002 1020g 993 1043g 975 1005g 966 999r 990 1026r 1011 1047r 966 1043g 954 993g 939 966g 936 972r 930 1017g 885 957g 909 948r 936 957g 930 963r 936 999r 903 963g 909 930g 909 936r 921 948r 876 936g 873 909g 876 912r 858 909g 867 903g 837 882g 846 891r 849 888g 843 882g 822 864g 846 885r 876 897r 864 888g 858 903r 891 930r 912 939r 885 936g 813 897g 867 912r 867 927g 849 876g 828 876r 840 882g 858 882r 849 882g 846 867g 846 891r 876 912r 837 903g 846 882g 831 876g 843 864g 819 864r 840 870r 813 885g 777 825g 765 795g 726 774g 705 777r 726 765r 741 777r 750 783r 741 795g 726 768g 711 786g 727 867r`;
const late = `1402 1453g 1420 1478r 1455 1497r 1470 1499g 1455 1480g 1455 1478g 1453 1475g 1445 1458g 1447 1457g 1423 1453g 1388 1428g 1384 1414r 1400 1427r 1410 1432r 1404 1425g 1392 1428g 1330 1410g 1274 1352g 1300 1343r 1313 1347r 1325 1352r 1295 1350g 1310 1336r 1330 1371r 1320 1371g 1294 1325g 1294 1347r 1307 1360r 1325 1362r 1345 1375r 1362 1400r 1385 1410g 1378 1397g 1378 1395g 1372 1397r 1382 1402r 1382 1404r 1350 1388g 1350 1375r 1330 1388g 1244 1358g 1307 1340r 1323 1362r 1337 1382g 1310 1345g 1304 1334r 1330 1340r 1310 1415r 1350 1397g 1360 1400r 1347 1392g 1365 1397r 1364 1402r 1350 1392g 1325 1355g 1325 1355g 1325 1345g 1291 1334g 1307 1350r 1337 1378r 1337 1380g 1324 1378r 1355 1392r 1388 1400r 1388 1425r 1410 1450r 1417 1448r 1430 1473r 1425 1456g 1404 1428g 1170 1415g 1148 1222g 1163 1244r 1196 1242r 1213 1254r 1215 1271g 1204 1254r 1192 1244g 1163 1215g 1155 1254r 1180 1244r 1167 1244g 1032 1242r 1192 1260r 1213 1300r 1202 1294g 1240 1268r 1260 1323r 1273 1339g 1265 1336g 1215 1273g 1190 1244g 1184 1260r 1222 1267r 1180 1247g 1176 1238g 1160 1210g 1155 1202r 1175 1213r 1196 1265r 1210 1271g 1148 1244g 1163 1208g 1115 1202g 1040 1140g 970 1065g 965 1050r 1013 1115g 905 1058g 854 1010r 920 1058r 978 1058g 911 1040g 710 928g 737 860r 784 850r 804 866r 797 850r 737 843g 782 830g 758 834g 755 810g 743 856g 614 787g 617 712g 543 775g 462 617g 416 534r 488 608g 478 632r 406 575g 212 478g 194 338r 216 345g 168 310g 102 235r 168 377r 295 684r 400 556g 458 684r 488 612g 340 503g 168 377g 155 327r 240 347r 302 382g 282 357r 345 421r 357 448r 341 438g 315 443r 338 448r 431 493g 412 516r 393 475g 421 617r 562 710g 537 834r 765 983r 704 983g 602 749g 700 791r 654 765g 658 739r 640 745r 617 769g 653 712r 605 706g 622 700r 677 747r 677 810r 743 810g 658 775g 673 775r 739 797r 706 769g 730 765r 737 808r 730 795g 724 817r 719 789g 697 754r 752 791r 710 771g 638 725g 622 666g 625 680g 553 645g 547 605r 534 586g 540 592r 547 600g 511 588r 520 600g 566 614r 588 743r 703 791r 745 847r 756 827r 791 860g 739 808g 677 810g 680 745r 690 730r 700 738r 700 738r 694 873r 795 899g 749 813g 749 791g 745 797r 614 795g 618 687r 622 693r 575 677g 562 612g 560 699r 634 693r 634 784r 622 791g 597 801g 660 787r 730 795g 700 767r 725 782r 745 817r 801 856r 788 860g 778 847g 775 853r 850 895r 860 893r 856 908r 886 965r 952 1089r 997 1065g 967 1026g 971 1023r 893 993g 890 960r 883 938g 869 910r 893 925g 810 934r 908 978r 934 1032r 993 1069r 1052 1252r 1184 1448r 1091 1222g 1117 1232r 1160 1242r 1163 1219g 1163 1210r 1170 1202r 1184 1232r 1190 1238r 1167 1247r 1200 1247r 1196 1247g 1190 1222g`;
const paths = { g: '', r: '' };
const trace = (src, from, to, top, unit) => {
  const list = [...src.matchAll(/(\d+) (\d+)([gr])/g)];
  const step = (to - from) / (list.length - 1);
  list.forEach(([, hi, lo, dir], i) => {
    paths[dir] += `M${(from + i * step).toFixed(1)} ${(top + hi / unit).toFixed(1)}V${(top + lo / unit).toFixed(1)}`;
  });
};
trace(early, 109, 798, 620, 3);
trace(late, 800, 1484, 240, 2.178);
put($('candles'), 'path', { d: paths.g, stroke: '#23876a', 'stroke-width': 1.8 });
put($('candles'), 'path', { d: paths.r, stroke: '#b23a35', 'stroke-width': 1.8 });

// MACD: key points are x, y pairs on the indicator grid, where 531 is zero
const grid = s => s.split(/\s+/).reduce((a, v, i) => (i % 2 ? a[a.length - 1].push(+v) : a.push([+v]), a), []);
const hist = grid(`9 457 14 457 23 408 30 440 36 490 42 530 46 570 55 580 62 635 68 658 76 645 82 560 86 526 92 528 98 560 106 588 113 585 121 605 126 560 133 525 140 480 150 430 157 480 161 540 167 580 180 578 196 588 210 555 218 545 228 556 236 530 243 524 250 540 260 600 268 560 275 533 280 510 292 502 300 508 312 488 321 480 330 510 340 536 350 526 365 526 372 540 380 566 390 532 404 519 415 540 430 555 440 580 447 625 455 570 462 520 467 490 480 490 495 484 510 495 522 522 535 525 545 488 555 500 562 525 570 560 580 590 592 575 605 550 612 520 622 502 640 508 655 502 670 515 680 526 692 553 705 540 716 526 730 541 745 528 758 495 770 510 778 526 785 570 793 590 805 570 815 526 825 520 836 475 845 490 860 515 868 540 875 573 887 573 897 540 905 522 918 518 930 560 942 535 950 515 960 530 970 560 982 580 988 540 993 455 998 435 1008 450 1020 480 1028 522 1034 560 1042 595 1052 560 1062 530 1068 515 1078 545 1088 500 1095 450 1103 430 1106 460 1119 412 1128 455 1135 495 1145 520 1151 450 1158 428 1163 465 1170 425 1177 402 1182 405 1185 500 1188 560 1195 685 1203 580 1212 600 1222 650 1232 670 1240 700 1245 770 1248 852 1251 852 1253 790 1258 720 1263 640 1270 580 1277 528 1285 548 1292 526 1303 528 1312 505 1320 500 1328 450 1338 408 1345 430 1355 480 1360 545 1368 630 1374 600 1383 550 1392 580 1402 540 1407 470 1416 435 1424 490 1429 530 1438 560 1448 595 1458 590 1468 625 1475 645 1482 600 1487 545 1492 510 1498 490 1503 515 1508 550 1514 625 1523 615 1535 565 1543 535 1549 508`);
const dif = grid(`10 402 16 370 26 308 34 308 40 335 48 360 54 375 60 430 68 485 77 520 84 468 94 467 102 500 112 530 117 528 123 566 130 558 137 525 146 470 152 448 158 475 166 515 175 533 188 553 200 588 212 590 222 592 230 604 236 590 250 592 256 625 265 655 276 642 290 606 305 592 320 552 330 548 340 560 358 562 374 562 382 582 395 566 408 560 425 575 438 600 442 650 449 664 460 655 470 615 480 592 495 560 515 540 535 545 545 510 558 497 567 510 575 550 588 573 608 575 622 550 640 535 655 505 675 493 690 505 702 518 715 512 745 515 760 478 776 478 785 500 796 545 808 546 820 520 835 485 850 472 862 475 872 500 887 533 902 520 918 505 938 538 952 518 963 530 975 560 985 580 992 530 1003 465 1015 430 1026 432 1034 470 1046 503 1060 495 1070 478 1082 495 1092 450 1102 385 1110 380 1118 310 1126 298 1144 310 1152 260 1160 215 1166 220 1172 175 1183 103 1188 200 1197 290 1204 265 1212 290 1220 350 1230 410 1240 470 1246 560 1250 660 1258 690 1268 675 1280 645 1288 655 1300 645 1312 640 1318 620 1326 580 1335 510 1343 475 1350 465 1356 470 1362 530 1372 590 1385 575 1396 606 1404 595 1412 530 1421 495 1427 530 1438 540 1450 580 1465 630 1473 680 1481 698 1490 650 1501 627 1508 640 1515 720 1525 745 1540 735 1550 715`);
const dea = grid(`10 440 20 400 32 345 42 335 55 350 66 410 78 468 94 470 108 500 120 528 132 542 140 535 150 495 158 484 170 505 185 528 200 560 225 590 250 592 262 625 278 637 300 620 320 580 330 563 370 560 388 572 410 566 438 583 450 625 462 646 480 622 505 580 520 550 540 540 555 510 565 505 575 520 590 560 608 570 630 560 650 530 670 505 690 500 705 512 750 515 768 490 780 483 792 505 805 535 825 530 840 495 860 478 875 490 895 518 925 512 945 525 962 520 975 540 988 560 1000 520 1012 470 1028 445 1045 480 1060 490 1084 488 1095 450 1110 410 1125 345 1135 325 1146 318 1158 270 1168 235 1180 175 1187 163 1192 180 1200 225 1215 265 1228 330 1240 400 1250 500 1258 580 1265 635 1275 647 1300 650 1318 640 1335 590 1345 530 1356 497 1365 520 1378 560 1390 575 1403 590 1412 560 1424 528 1438 530 1455 565 1470 610 1482 655 1490 663 1505 645 1515 680 1530 720 1540 728 1550 725`);
const px = x => (100 + x / 1.12).toFixed(1);
const py = y => (1050 + y / 3).toFixed(1);
const bars = { g: '', r: '' };
let k = 0;
for (let x = 9; x < 1550; x += 2.942) {
  while (k < hist.length - 2 && hist[k + 1][0] < x) k++;
  const [x0, y0] = hist[k], [x1, y1] = hist[k + 1];
  const y = y0 + (y1 - y0) * (x - x0) / (x1 - x0);
  bars[y < 531 ? 'g' : 'r'] += `M${px(x)} 1227V${py(y)}`;
}
const line = pts => 'M' + pts.map(([x, y]) => px(x) + ' ' + py(y)).join('L');
const macd = $('macd');
put(macd, 'path', { d: bars.g, stroke: '#219873', 'stroke-width': 1.5 });
put(macd, 'path', { d: bars.r, stroke: '#c63833', 'stroke-width': 1.5 });
put(macd, 'path', { d: line(dif), fill: 'none', stroke: '#c9ccd2', 'stroke-width': 1.8, 'stroke-linejoin': 'round' });
put(macd, 'path', { d: line(dea), fill: 'none', stroke: '#f5ec1e', 'stroke-width': 1.8, 'stroke-linejoin': 'round' });
```
